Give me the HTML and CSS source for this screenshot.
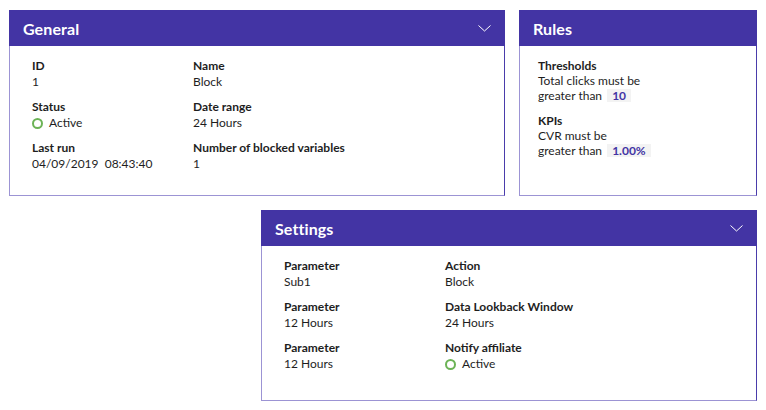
FILE: index.html
```html
<!DOCTYPE html>
<html lang="en">
<head>
<meta charset="utf-8">
<title>Block</title>
<link rel="stylesheet" href="styles.css">
</head>
<body>
<div class="page">
  <div class="row">
    <section class="card card-wide card-general">
      <header class="card-head">
        <h2 class="card-title">General</h2>
        <svg class="chev" width="13" height="7" viewBox="0 0 13 7"><path d="M0.5 0.5 L6.5 6 L12.5 0.5" fill="none" stroke="#fff" stroke-width="1"/></svg>
      </header>
      <div class="card-body grid">
        <div class="field"><div class="label">ID</div><div class="value">1</div></div>
        <div class="field"><div class="label">Name</div><div class="value">Block</div></div>
        <div class="field"><div class="label">Status</div><div class="value status"><span class="ring"></span>Active</div></div>
        <div class="field"><div class="label">Date range</div><div class="value">24 Hours</div></div>
        <div class="field"><div class="label">Last run</div><div class="value">04/09/2019&nbsp; 08:43:40</div></div>
        <div class="field"><div class="label">Number of blocked variables</div><div class="value">1</div></div>
      </div>
    </section>
    <section class="card card-narrow">
      <header class="card-head">
        <h2 class="card-title">Rules</h2>
      </header>
      <div class="card-body rules">
        <div class="rule">
          <div class="label">Thresholds</div>
          <div class="value">Total clicks must be</div>
          <div class="value">greater than <span class="badge">10</span></div>
        </div>
        <div class="rule">
          <div class="label">KPIs</div>
          <div class="value">CVR must be</div>
          <div class="value">greater than <span class="badge">1.00%</span></div>
        </div>
      </div>
    </section>
  </div>
  <div class="row row-end">
    <section class="card card-wide card-settings">
      <header class="card-head">
        <h2 class="card-title">Settings</h2>
        <svg class="chev" width="13" height="7" viewBox="0 0 13 7"><path d="M0.5 0.5 L6.5 6 L12.5 0.5" fill="none" stroke="#fff" stroke-width="1"/></svg>
      </header>
      <div class="card-body grid">
        <div class="field"><div class="label">Parameter</div><div class="value">Sub1</div></div>
        <div class="field"><div class="label">Action</div><div class="value">Block</div></div>
        <div class="field"><div class="label">Parameter</div><div class="value">12 Hours</div></div>
        <div class="field"><div class="label">Data Lookback Window</div><div class="value">24 Hours</div></div>
        <div class="field"><div class="label">Parameter</div><div class="value">12 Hours</div></div>
        <div class="field"><div class="label">Notify affiliate</div><div class="value status"><span class="ring"></span>Active</div></div>
      </div>
    </section>
  </div>
</div>
</body>
</html>
```
FILE: styles.css
```css
* { box-sizing: border-box; }
html, body { margin: 0; padding: 0; background: #fff; }
body {
  font-family: Lato, "Liberation Sans", Arial, sans-serif;
  font-size: 12px;
  color: #1e1e1e;
}
.page {
  padding: 10px 9px 0 9px;
  width: 766px;
  display: flex;
  flex-direction: column;
  gap: 14px;
}
.row {
  display: flex;
  gap: 14px;
  width: 748px;
}
.row-end { justify-content: flex-end; }
.card {
  border: 1px solid #9c94d4;
  border-right-color: #4a3cab;
  background: #fff;
  display: flex;
  flex-direction: column;
}
.card-wide { width: 496px; }
.card-narrow { width: 238px; }
.card-general { height: 186px; }
.card-settings { height: 191px; }
.card-head {
  background: #4334a4;
  height: 36px;
  margin: -1px -1px 0 -1px;
  padding: 0 14px 0 14px;
  display: flex;
  align-items: center;
  justify-content: space-between;
}
.card-title {
  margin: 0;
  color: #fff;
  font-size: 16px;
  font-weight: 700;
  letter-spacing: 0.1px;
}
.chev { display: block; margin-top: 1px; }
.card-body { flex: 1; }
.grid {
  padding: 12px 20px 0 22px;
  display: grid;
  grid-template-columns: 161px 1fr;
  align-content: start;
  row-gap: 9px;
}
.label { font-weight: 700; line-height: 16px; }
.value { line-height: 16px; }
.status { display: flex; align-items: center; gap: 6px; }
.ring {
  width: 11px;
  height: 11px;
  border: 2px solid #6cb356;
  border-radius: 50%;
  display: inline-block;
}
.rules {
  padding: 12px 10px 0 18px;
  display: flex;
  flex-direction: column;
  gap: 10px;
}
.rule .value { line-height: 14.5px; }
.badge {
  display: inline-block;
  background: #f3f3f3;
  color: #4334a4;
  font-weight: 700;
  padding: 0 5px;
  margin-left: 2px;
  line-height: 13px;
}
```
